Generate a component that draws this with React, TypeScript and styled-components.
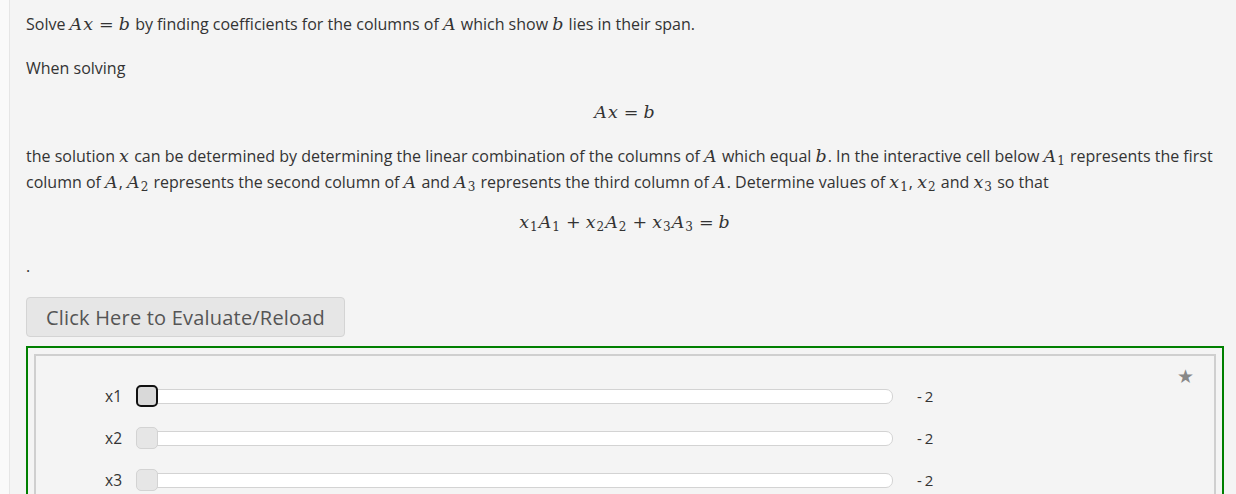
import styled, { createGlobalStyle } from 'styled-components'

const GlobalStyle = createGlobalStyle`
  html, body {
    margin: 0;
    padding: 0;
    background: #fafafa;
  }
  body {
    font-family: 'Open Sans', 'Noto Sans', sans-serif;
    color: #333;
  }
`;

const Page = styled.div`
  margin-left: 9px;
  border-left: 1px solid #e6e6e6;
  background: #f4f4f4;
  height: 494px;
  padding: 11px 12px 0 16px;
  box-sizing: border-box;
  overflow: hidden;
`;

const Para = styled.p`
  margin: 0 0 18px 0;
  font-size: 16px;
  line-height: 26px;
`;

const M = styled.span`
  font-family: 'DejaVu Serif', 'Liberation Serif', serif;
  font-style: italic;
  font-size: 17.5px;
  letter-spacing: 1px;
  line-height: 1;
`;

const Rel = styled.span`
  font-family: 'DejaVu Serif', 'Liberation Serif', serif;
  font-style: normal;
  font-size: 17.5px;
  line-height: 1;
  padding: 0 5px;
`;

const Sub = styled.sub`
  font-style: normal;
  font-size: 12px;
  vertical-align: -3px;
  line-height: 0;
`;

const Display = styled.div<{ $tight?: boolean }>`
  text-align: center;
  margin: ${(p) => (p.$tight ? '-4px' : '0')} 0 18px 0;
  line-height: 26px;
  font-size: 16px;
`;

const Dot = styled.div`
  font-size: 16px;
  line-height: 26px;
  margin: 4px 0 18px 0;
`;

const EvalButton = styled.button`
  display: block;
  font-family: 'Open Sans', 'DejaVu Sans', sans-serif;
  font-size: 20px;
  letter-spacing: 0.2px;
  color: #555;
  background: #e6e6e6;
  border: 1px solid #d4d4d4;
  border-radius: 4px;
  padding: 0 19px;
  height: 40px;
  cursor: pointer;
`;

const Outer = styled.div`
  margin-top: 9px;
  border: 2px solid #008000;
  padding: 6px;
`;

const Inner = styled.div`
  position: relative;
  border: 2px solid #cfcfcf;
  border-bottom: none;
  padding: 29px 0 20px 0;
`;

const Star = styled.span`
  position: absolute;
  top: 9px;
  right: 20px;
  color: #888;
  font-size: 19px;
  font-family: 'DejaVu Sans', sans-serif;
`;

const Grid = styled.div`
  display: grid;
  grid-template-columns: 86px 757px 80px;
  column-gap: 14px;
  row-gap: 20px;
  align-items: center;
`;

const Label = styled.div`
  text-align: right;
  font-size: 15.5px;
  line-height: 22px;
`;

const Slider = styled.div`
  position: relative;
  height: 22px;
  display: flex;
  align-items: center;
`;

const Track = styled.div`
  margin-left: 10px;
  flex: 1;
  height: 13px;
  background: #fff;
  border: 1px solid #d3d3d3;
  border-radius: 0 7px 7px 0;
`;

const Thumb = styled.div<{ $focused?: boolean }>`
  position: absolute;
  left: 0;
  top: 0;
  width: 22px;
  height: 22px;
  box-sizing: border-box;
  border-radius: 5px;
  background: ${(p) => (p.$focused ? '#d9d9d9' : '#e6e6e6')};
  border: ${(p) => (p.$focused ? '2px solid #111' : '1px solid #d3d3d3')};
`;

const Value = styled.div`
  font-size: 15px;
  letter-spacing: 3px;
  padding-left: 10px;
`;

const rows = ['x1', 'x2', 'x3'];

export default function App() {
  return (
    <>
      <GlobalStyle />
      <Page>
        <Para>
          Solve <M>Ax</M><Rel>=</Rel><M>b</M> by finding coefficients for the columns of <M>A</M> which show <M>b</M> lies in their span.
        </Para>
        <Para>When solving</Para>
        <Display>
          <M>Ax</M><Rel>=</Rel><M>b</M>
        </Display>
        <Para>
          the solution <M>x</M> can be determined by determining the linear combination of the columns of <M>A</M> which equal <M>b</M>. In the interactive cell below <M>A<Sub>1</Sub></M> represents the first column of <M>A</M>, <M>A<Sub>2</Sub></M> represents the second column of <M>A</M> and <M>A<Sub>3</Sub></M> represents the third column of <M>A</M>. Determine values of <M>x<Sub>1</Sub></M>, <M>x<Sub>2</Sub></M> and <M>x<Sub>3</Sub></M> so that
        </Para>
        <Display $tight>
          <M>x<Sub>1</Sub>A<Sub>1</Sub></M><Rel>+</Rel><M>x<Sub>2</Sub>A<Sub>2</Sub></M><Rel>+</Rel><M>x<Sub>3</Sub>A<Sub>3</Sub></M><Rel>=</Rel><M>b</M>
        </Display>
        <Dot>.</Dot>
        <EvalButton>Click Here to Evaluate/Reload</EvalButton>
        <Outer>
          <Inner>
            <Star>★</Star>
            <Grid>
              {rows.map((r, i) => (
                <>
                  <Label key={r + 'l'}>{r}</Label>
                  <Slider key={r + 's'}>
                    <Track />
                    <Thumb $focused={i === 0} />
                  </Slider>
                  <Value key={r + 'v'}>-2</Value>
                </>
              ))}
            </Grid>
          </Inner>
        </Outer>
      </Page>
    </>
  );
}
